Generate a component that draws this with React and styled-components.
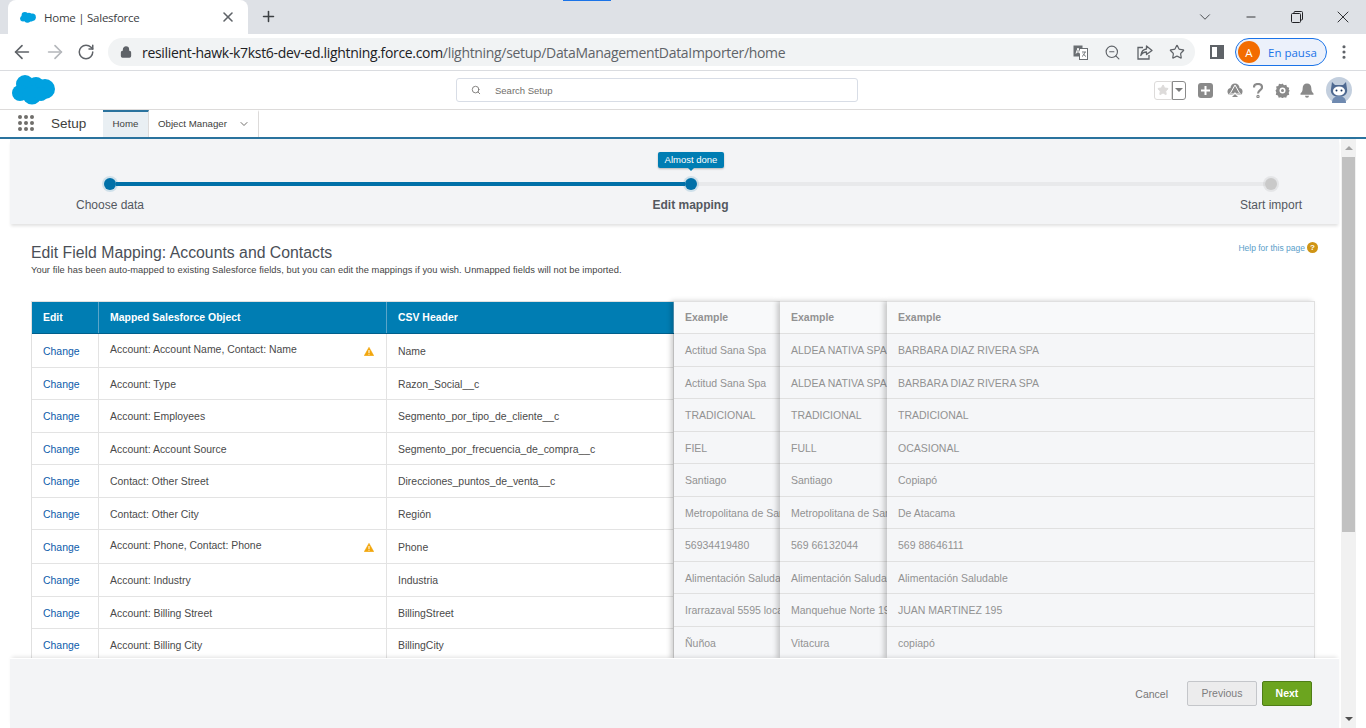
import React from 'react';
import styled, { createGlobalStyle } from 'styled-components';
import { ArrowLeft, ArrowRight, RotateCw, Lock, X, Plus, Minus, ChevronDown, Search, ZoomOut, Star, EllipsisVertical } from 'lucide-react';

const GlobalStyle = createGlobalStyle`
	html, body { margin: 0; padding: 0; height: 100%; overflow: hidden; background: #fff; }
	body { font-family: "Liberation Sans", Arial, sans-serif; }
	* { box-sizing: border-box; }
`;

const Page = styled.div`
	width: 1366px;
	height: 728px;
	display: flex;
	flex-direction: column;
	overflow: hidden;
`;

/* browser chrome */
const TabStrip = styled.div`
	height: 34px;
	background: #dee1e6;
	display: flex;
	align-items: center;
	padding-left: 8px;
	position: relative;
`;
const LoadBar = styled.div`
	position: absolute;
	left: 563px;
	top: 0;
	width: 48px;
	height: 1px;
	background: #1a73e8;
`;
const Tab = styled.div`
	width: 240px;
	height: 34px;
	background: #fff;
	border-radius: 8px 8px 0 0;
	display: flex;
	align-items: center;
	padding: 0 12px 0 12px;
	font: 11.5px "Open Sans", "Noto Sans", sans-serif;
	letter-spacing: -0.25px;
	color: #3c4043;
`;
const TabTitle = styled.span`
	flex: 1;
	margin-left: 8px;
`;
const NewTab = styled.div`
	margin: -1px 0 0 12px;
	display: flex;
	color: #3c4043;
`;
const WindowControls = styled.div`
	margin-left: auto;
	display: flex;
	align-items: center;
	color: #3c4043;
`;
const WindowButton = styled.div`
	width: 46px;
	height: 28px;
	display: flex;
	align-items: center;
	justify-content: center;
`;
const Toolbar = styled.div`
	height: 37px;
	background: #fff;
	border-bottom: 1px solid #dadce0;
	display: flex;
	align-items: center;
	padding-left: 10px;
	color: #5f6368;
`;
const NavButton = styled.div`
	width: 24px;
	flex: none;
	display: flex;
	justify-content: center;
	margin-right: ${p => p.$gap}px;
	color: ${p => p.$off ? '#b4b7bb' : '#5f6368'};
`;
const Omnibox = styled.div`
	width: 1087px;
	height: 28px;
	margin-left: 2px;
	background: #f1f3f4;
	border-radius: 14px;
	display: flex;
	align-items: center;
	padding: 0 10px 0 12px;
`;
const Url = styled.div`
	flex: 1;
	margin-left: 10px;
	font: 14px "Open Sans", "Noto Sans", sans-serif;
	letter-spacing: -0.32px;
	color: #5f6368;
	white-space: nowrap;
`;
const Host = styled.span`
	color: #202124;
`;
const OmniIcons = styled.div`
	display: flex;
	align-items: center;
	gap: 16px;
	color: #5f6368;
`;
const SidePanel = styled.div`
	width: 14px;
	height: 14px;
	margin-left: 15px;
	border: 2px solid #5f6368;
	border-right-width: 7px;
`;
const Profile = styled.div`
	width: 92px;
	height: 28px;
	margin-left: 11px;
	border: 1px solid #1a73e8;
	border-radius: 14px;
	background: #ecf1fb;
	display: flex;
	align-items: center;
	padding-left: 2px;
	font: 11.5px "Open Sans", "Noto Sans", sans-serif;
	color: #1a73e8;
`;
const ProfileAvatar = styled.div`
	width: 22px;
	height: 22px;
	border-radius: 50%;
	background: #f36c00;
	color: #fff;
	display: flex;
	align-items: center;
	justify-content: center;
	margin-right: 8px;
`;
const MenuDots = styled.div`
	margin-left: 8px;
	display: flex;
`;

/* salesforce header */
const GlobalHeader = styled.div`
	height: 39px;
	background: #fff;
	border-bottom: 1px solid #dddbda;
	display: flex;
	align-items: center;
	padding: 0 14px 0 12px;
`;
const SearchBox = styled.div`
	width: 402px;
	height: 24px;
	margin-left: 401px;
	border: 1px solid #d8dde6;
	border-radius: 3px;
	display: flex;
	align-items: center;
	padding-left: 14px;
	font-size: 9.5px;
	color: #706e6b;
	gap: 14px;
`;
const HeaderActions = styled.div`
	margin-left: auto;
	display: flex;
	align-items: center;
`;
const FavStar = styled.div`
	width: 18px;
	height: 19px;
	border: 1px solid #dddbda;
	border-radius: 3px 0 0 3px;
	display: flex;
	align-items: center;
	justify-content: center;
	color: #dddbda;
`;
const FavMenu = styled.div`
	width: 14px;
	height: 19px;
	border: 1px solid #8a8a8a;
	border-radius: 0 3px 3px 0;
	display: flex;
	align-items: center;
	justify-content: center;
	margin-right: 12px;
	&::after {
		content: '';
		border: 4px solid transparent;
		border-top: 4px solid #7a7a7a;
		border-bottom: 0;
	}
`;
const HeaderIcon = styled.svg`
	display: block;
	margin-right: ${p => p.$gap}px;
`;

const NavBar = styled.div`
	height: 27px;
	background: #fff;
	display: flex;
	align-items: stretch;
`;
const Launcher = styled.div`
	width: 16px;
	margin: 5px 0 6px 18px;
	display: grid;
	grid-template-columns: repeat(3, 4px);
	grid-auto-rows: 4px;
	gap: 2px;
`;
const LauncherDot = styled.span`
	background: #706e6b;
	border-radius: 50%;
`;
const AppName = styled.div`
	width: 52px;
	margin-left: 17px;
	font-size: 13.5px;
	line-height: 27px;
	color: #3e3e3c;
`;
const NavTab = styled.div`
	display: flex;
	align-items: center;
	justify-content: ${p => p.$active ? 'center' : 'flex-start'};
	width: ${p => p.$active ? 46 : 110}px;
	padding: 0 0 2px ${p => p.$active ? 0 : 9}px;
	border-top: 2px solid ${p => p.$active ? '#2a739e' : 'transparent'};
	border-right: 1px solid #dddbda;
	background: ${p => p.$active ? '#e9eff3' : '#fff'};
	font-size: 9.7px;
	color: #3e3e3c;
	gap: 11px;
`;
const BlueRule = styled.div`
	height: 2px;
	background: #2a739e;
`;

/* wizard */
const Content = styled.div`
	flex: 1;
	min-height: 0;
	display: flex;
	padding-left: 10px;
	background: #fff;
`;
const Wizard = styled.div`
	width: 1329px;
	display: flex;
	flex-direction: column;
	min-height: 0;
`;
const StepperPanel = styled.div`
	position: relative;
	z-index: 2;
	height: 85px;
	flex: none;
	background: #f3f4f6;
	box-shadow: 0 3px 3px -1px rgba(0, 0, 0, 0.12);
	padding-top: 39px;
`;
const Track = styled.div`
	display: flex;
	align-items: center;
	margin: 0 62px 0 94px;
`;
const Segment = styled.div`
	flex: ${p => p.$grow};
	height: 4px;
	background: ${p => p.$done ? '#0070a8' : '#e8e9eb'};
`;
const Dot = styled.div`
	position: relative;
	width: 12px;
	height: 12px;
	flex: none;
	border-radius: 50%;
	background: ${p => p.$done ? '#0070a8' : '#c9c9c9'};
	box-shadow: 0 0 0 2px ${p => p.$done ? 'rgba(0, 112, 168, 0.15)' : 'rgba(0, 0, 0, 0.06)'};
`;
const Tooltip = styled.div`
	position: absolute;
	left: 50%;
	bottom: 22px;
	transform: translateX(-50%);
	width: 66px;
	height: 16px;
	background: #007db3;
	border-radius: 2px;
	color: #fff;
	font-size: 9.5px;
	line-height: 16px;
	text-align: center;
	white-space: nowrap;
	box-shadow: 0 1px 2px rgba(0, 0, 0, 0.25);
	&::after {
		content: '';
		position: absolute;
		left: 50%;
		top: 100%;
		margin-left: -3px;
		border: 3px solid transparent;
		border-top-color: #007db3;
		border-bottom: 0;
	}
`;
const StepLabels = styled.div`
	display: grid;
	grid-template-columns: 120px 1fr 120px;
	margin: 8px 8px 0 40px;
`;
const StepLabel = styled.div`
	text-align: center;
	font-size: 12px;
	line-height: 15px;
	color: #54585f;
	font-weight: ${p => p.$current ? 700 : 400};
	white-space: nowrap;
`;
const Body = styled.div`
	flex: 1;
	min-height: 0;
	overflow: hidden;
	background: #fff;
	padding: 19px 21px 0;
`;
const TitleRow = styled.div`
	display: flex;
	justify-content: space-between;
	height: 58px;
`;
const Title = styled.h1`
	margin: 0;
	font-size: 15.8px;
	line-height: 20px;
	font-weight: 400;
	color: #4a4f57;
`;
const Description = styled.p`
	margin: 1px 0 0;
	font-size: 9.3px;
	line-height: 13px;
	color: #444;
	letter-spacing: 0.06px;
`;
const HelpLink = styled.div`
	display: flex;
	align-items: center;
	align-self: flex-start;
	gap: 2px;
	margin-top: -1px;
	font-size: 8.5px;
	color: #5a9ec9;
`;
const HelpIcon = styled.span`
	width: 11px;
	height: 11px;
	border-radius: 50%;
	background: #cf9415;
	color: #fff;
	font-size: 8px;
	font-weight: 700;
	line-height: 11px;
	text-align: center;
`;
const TableWrap = styled.div`
	display: flex;
	align-items: flex-start;
`;
const MappingTable = styled.div`
	width: 643px;
	flex: none;
	border-left: 1px solid #e0e0e0;
	border-top: 1px solid #e0e0e0;
`;
const MappingRow = styled.div`
	display: grid;
	grid-template-columns: 67px 288px 287px;
	height: ${p => p.$h}px;
	background: ${p => p.$head ? '#007db3' : '#fff'};
	border-bottom: 1px solid ${p => p.$head ? '#005f8c' : '#e3e3e3'};
	font-size: 10.45px;
	color: #4a4a4a;
`;
const MappingCell = styled.div`
	display: flex;
	align-items: center;
	justify-content: space-between;
	padding: ${p => p.$head ? 0 : 2}px 12px 0 11px;
	border-right: 1px solid ${p => p.$head ? '#5aa5c9' : '#e3e3e3'};
	color: ${p => p.$link ? '#0b5cab' : p.$head ? '#fff' : '#4a4a4a'};
	font-weight: ${p => p.$head ? 700 : 400};
	white-space: nowrap;
`;
const WarnText = styled.span`
	margin-top: -4px;
`;
const ExampleColumn = styled.div`
	position: relative;
	flex: none;
	width: ${p => p.$w}px;
	background: #f5f6f8;
	border-top: 1px solid #e0e0e0;
	border-right: ${p => p.$last ? '1px solid #e0e0e0' : '0'};
	box-shadow: -3px 0 5px rgba(0, 0, 0, 0.2);
`;
const ExampleHead = styled.div`
	height: 32px;
	padding-left: 11px;
	background: #f8f9fa;
	border-bottom: 1px solid #e0e0e0;
	font-size: 10.5px;
	font-weight: 700;
	line-height: 31px;
	color: #929292;
`;
const ExampleCell = styled.div`
	height: 32.5px;
	padding-left: 11px;
	border-bottom: 1px solid #e0e0e0;
	font-size: 10.5px;
	line-height: 32px;
	color: #929292;
	white-space: nowrap;
	overflow: hidden;
`;
const Footer = styled.div`
	position: relative;
	z-index: 3;
	height: 70px;
	flex: none;
	background: #f3f4f6;
	border-top: 1px solid #fff;
	box-shadow: 0 -3px 4px -2px rgba(0, 0, 0, 0.12);
	display: flex;
	align-items: center;
	justify-content: flex-end;
	padding: 0 27px 0 0;
`;
const CancelLink = styled.div`
	font-size: 10.5px;
	color: #777;
	margin-right: 19px;
`;
const Button = styled.div`
	height: 25px;
	width: ${p => p.$w}px;
	margin-right: ${p => p.$gap || 0}px;
	border-radius: 2px;
	border: 1px solid ${p => p.$primary ? '#4f7d17' : '#c4c6ca'};
	background: ${p => p.$primary ? '#6ca51f' : '#ececed'};
	color: ${p => p.$primary ? '#fff' : '#7d7d7d'};
	font-size: 10.5px;
	font-weight: ${p => p.$primary ? 700 : 400};
	line-height: 23px;
	text-align: center;
`;

/* page scrollbar */
const Scrollbar = styled.div`
	width: 15px;
	margin: 0 10px 0 2px;
	background: #f1f1f1;
	display: flex;
	flex-direction: column;
	align-items: center;
`;
const ScrollArrow = styled.div`
	height: 18px;
	flex: none;
	display: flex;
	align-items: center;
	justify-content: center;
	&::after {
		content: '';
		border: 4px solid transparent;
		${p => p.$down ? 'border-top: 4px solid #505050; border-bottom: 0;' : 'border-bottom: 4px solid #a3a3a3; border-top: 0;'}
	}
`;
const ScrollThumb = styled.div`
	width: 13px;
	height: 375px;
	flex: none;
	background: #c1c1c1;
`;
const ScrollRest = styled.div`
	flex: 1;
`;

const rows = [
	{ obj: 'Account: Account Name, Contact: Name', csv: 'Name', warn: true },
	{ obj: 'Account: Type', csv: 'Razon_Social__c' },
	{ obj: 'Account: Employees', csv: 'Segmento_por_tipo_de_cliente__c' },
	{ obj: 'Account: Account Source', csv: 'Segmento_por_frecuencia_de_compra__c' },
	{ obj: 'Contact: Other Street', csv: 'Direcciones_puntos_de_venta__c' },
	{ obj: 'Contact: Other City', csv: 'Región' },
	{ obj: 'Account: Phone, Contact: Phone', csv: 'Phone', warn: true },
	{ obj: 'Account: Industry', csv: 'Industria' },
	{ obj: 'Account: Billing Street', csv: 'BillingStreet' },
	{ obj: 'Account: Billing City', csv: 'BillingCity' },
];

const examples = [
	{ w: 106, cells: ['Actitud Sana Spa', 'Actitud Sana Spa', 'TRADICIONAL', 'FIEL', 'Santiago', 'Metropolitana de Santiago', '56934419480', 'Alimentación Saludable', 'Irarrazaval 5595 local 3', 'Ñuñoa'] },
	{ w: 107, cells: ['ALDEA NATIVA SPA', 'ALDEA NATIVA SPA', 'TRADICIONAL', 'FULL', 'Santiago', 'Metropolitana de Santiago', '569 66132044', 'Alimentación Saludable', 'Manquehue Norte 1950', 'Vitacura'] },
	{ w: 428, last: true, cells: ['BARBARA DIAZ RIVERA SPA', 'BARBARA DIAZ RIVERA SPA', 'TRADICIONAL', 'OCASIONAL', 'Copiapó', 'De Atacama', '569 88646111', 'Alimentación Saludable', 'JUAN MARTINEZ 195', 'copiapó'] },
];

const SalesforceCloud = ({ w, h }) => (
	<svg width={w} height={h} viewBox="0 0 43 30" fill="#00a1e0">
		<circle cx="13" cy="9" r="9" />
		<circle cx="24" cy="10" r="8" />
		<circle cx="33" cy="14" r="10" />
		<circle cx="8" cy="18" r="8" />
		<circle cx="20" cy="20" r="9.5" />
		<circle cx="29" cy="19" r="7" />
	</svg>
);

const WarnIcon = () => (
	<svg width="10" height="9" viewBox="0 0 10 9">
		<path d="M5 0.3 9.8 8.7H0.2Z" fill="#f2a60c" stroke="#f2a60c" strokeWidth="0.5" strokeLinejoin="round" />
		<path d="M4.5 3h1v3h-1zM4.5 6.8h1v1h-1z" fill="#fff" />
	</svg>
);

const TranslateIcon = () => (
	<svg width="15" height="15" viewBox="0 0 15 15">
		<rect x="0.5" y="0.5" width="9" height="11" fill="#6a6e72" />
		<rect x="6.5" y="3.5" width="8" height="11" fill="#fff" stroke="#6a6e72" />
		<path d="M3 8.5 5 3l2 5.5M3.6 7h2.8" fill="none" stroke="#fff" strokeWidth="1" />
		<path d="M9 7h4M12 7c-.5 2-1.5 3.5-3 4.5M10 8.5c.6 1.2 1.6 2.3 3 3" fill="none" stroke="#6a6e72" strokeWidth="0.9" />
	</svg>
);

const ShareIcon = () => (
	<svg width="16" height="15" viewBox="0 0 16 15" fill="none" stroke="#5f6368" strokeWidth="1.3">
		<path d="M6 2.5H1V14h11v-4" />
		<path d="M9.5 1 15 5.5 9.5 9.5V7C7 7 5 8.2 3.8 10.5 4.3 6.8 6.3 4.3 9.5 4Z" strokeLinejoin="round" />
	</svg>
);

const RestoreIcon = () => (
	<svg width="12" height="12" viewBox="0 0 12 12" fill="none" stroke="#202124" strokeWidth="1">
		<rect x="0.5" y="2.5" width="9" height="9" rx="1" />
		<path d="M3 2.5v-1a1 1 0 0 1 1-1h6.5a1 1 0 0 1 1 1V8a1 1 0 0 1-1 1h-1" />
	</svg>
);

const App = () => (
	<Page>
		<GlobalStyle />
		<TabStrip>
			<LoadBar />
			<Tab>
				<SalesforceCloud w={16} h={11} />
				<TabTitle>Home | Salesforce</TabTitle>
				<X size={16} strokeWidth={2.4} color="#5f6368" />
			</Tab>
			<NewTab><Plus size={17} strokeWidth={2.2} /></NewTab>
			<WindowControls>
				<WindowButton><ChevronDown size={18} strokeWidth={1.2} /></WindowButton>
				<WindowButton><Minus size={14} strokeWidth={1.5} color="#202124" /></WindowButton>
				<WindowButton><RestoreIcon /></WindowButton>
				<WindowButton><X size={20} strokeWidth={1.1} color="#202124" /></WindowButton>
			</WindowControls>
		</TabStrip>
		<Toolbar>
			<NavButton $gap={9}><ArrowLeft size={22} strokeWidth={1.8} /></NavButton>
			<NavButton $gap={7} $off><ArrowRight size={22} strokeWidth={1.8} /></NavButton>
			<NavButton $gap={8}><RotateCw size={18} strokeWidth={2} /></NavButton>
			<Omnibox>
				<Lock size={12} strokeWidth={2.6} color="#5f6368" fill="#5f6368" />
				<Url><Host>resilient-hawk-k7kst6-dev-ed.lightning.force.com</Host>/lightning/setup/DataManagementDataImporter/home</Url>
				<OmniIcons>
					<TranslateIcon />
					<ZoomOut size={17} strokeWidth={1.6} />
					<ShareIcon />
					<Star size={16} strokeWidth={1.8} />
				</OmniIcons>
			</Omnibox>
			<SidePanel />
			<Profile>
				<ProfileAvatar>A</ProfileAvatar>
				En pausa
			</Profile>
			<MenuDots><EllipsisVertical size={18} strokeWidth={2.2} /></MenuDots>
		</Toolbar>
		<GlobalHeader>
			<SalesforceCloud w={43} h={30} />
			<SearchBox>
				<Search size={10} color="#706e6b" />
				Search Setup
			</SearchBox>
			<HeaderActions>
				<FavStar><Star size={12} fill="#dddbda" /></FavStar>
				<FavMenu />
				<HeaderIcon $gap={14} width="15" height="15" viewBox="0 0 15 15">
					<rect width="15" height="15" rx="3" fill="#8a8a8a" />
					<path d="M7.5 3v9M3 7.5h9" stroke="#fff" strokeWidth="2" />
				</HeaderIcon>
				<HeaderIcon $gap={10} width="16" height="14" viewBox="0 0 16 14" fill="#8a8a8a">
					<circle cx="8" cy="5" r="4.5" />
					<circle cx="4" cy="8.5" r="3.5" />
					<circle cx="12" cy="8.5" r="3.5" />
					<path d="M8 2 3.5 10M8 2l4.500 8M2 11h12" stroke="#fff" strokeWidth="1" />
					<path d="M5 14l3-3 3 3z" />
				</HeaderIcon>
				<HeaderIcon $gap={12} width="10" height="15" viewBox="0 0 10 15" fill="none" stroke="#8a8a8a" strokeWidth="2.2">
					<path d="M1 4.5C1 2.3 2.8 1 5 1s4 1.3 4 3.5c0 2.5-4 2.8-4 6" />
					<circle cx="5" cy="13.5" r="0.6" />
				</HeaderIcon>
				<HeaderIcon $gap={10} width="15" height="15" viewBox="0 0 15 15">
					<path d="M7.5 0.5 9 2.3l2.3-.5.7 2.2 2.2.8-.5 2.3 1 .5-1 1.9.5 2.3-2.2.7-.8 2.2-2.3-.5-1.4 1.3-1.5-1.3-2.3.5-.7-2.2-2.2-.7.5-2.3L.5 7.500l1.100-1.600-.5-2.300 2.200-.7.7-2.200 2.300.5z" fill="#8a8a8a" />
					<circle cx="7.5" cy="7.5" r="3" fill="#fff" />
					<circle cx="7.5" cy="7.5" r="1.5" fill="#8a8a8a" />
				</HeaderIcon>
				<HeaderIcon $gap={12} width="14" height="15" viewBox="0 0 14 15" fill="#8a8a8a">
					<path d="M7 .5c2.7 0 4.3 2 4.3 4.6 0 3 .9 4.2 2.2 5.4v1.2H.5v-1.200C1.800 9.300 2.700 8.100 2.700 5.100 2.700 2.500 4.300 .5 7 .5Z" />
					<path d="M5 12.700h4a2 2 0 0 1-4 0Z" />
				</HeaderIcon>
				<HeaderIcon $gap={0} width="26" height="26" viewBox="0 0 26 26">
					<circle cx="13" cy="13" r="13" fill="#c3cfde" />
					<path d="M6 5l3 3h8l3-3 1 7c1 4-2 8-8 8s-9-4-8-8z" fill="#4f6a92" />
					<ellipse cx="13" cy="14" rx="6" ry="4.5" fill="#fff" />
					<circle cx="10.5" cy="13.5" r="1" fill="#16325c" />
					<circle cx="15.5" cy="13.5" r="1" fill="#16325c" />
					<path d="M6 26c0-5 3-7 7-7s7 2 7 7z" fill="#6f8ab0" />
				</HeaderIcon>
			</HeaderActions>
		</GlobalHeader>
		<NavBar>
			<Launcher>
				{Array.from({ length: 9 }, (_, i) => <LauncherDot key={i} />)}
			</Launcher>
			<AppName>Setup</AppName>
			<NavTab $active>Home</NavTab>
			<NavTab>Object Manager <ChevronDown size={12} color="#706e6b" /></NavTab>
		</NavBar>
		<BlueRule />
		<Content>
			<Wizard>
				<StepperPanel>
					<Track>
						<Dot $done />
						<Segment $done $grow={569} />
						<Dot $done><Tooltip>Almost done</Tooltip></Dot>
						<Segment $grow={568} />
						<Dot />
					</Track>
					<StepLabels>
						<StepLabel>Choose data</StepLabel>
						<StepLabel $current>Edit mapping</StepLabel>
						<StepLabel>Start import</StepLabel>
					</StepLabels>
				</StepperPanel>
				<Body>
					<TitleRow>
						<div>
							<Title>Edit Field Mapping: Accounts and Contacts</Title>
							<Description>Your file has been auto-mapped to existing Salesforce fields, but you can edit the mappings if you wish. Unmapped fields will not be imported.</Description>
						</div>
						<HelpLink>Help for this page <HelpIcon>?</HelpIcon></HelpLink>
					</TitleRow>
					<TableWrap>
						<MappingTable>
							<MappingRow $head $h={31.5}>
								<MappingCell $head>Edit</MappingCell>
								<MappingCell $head>Mapped Salesforce Object</MappingCell>
								<MappingCell $head>CSV Header</MappingCell>
							</MappingRow>
							{rows.map(row => (
								<MappingRow key={row.obj} $h={row.warn ? 34 : 32.5}>
									<MappingCell $link>Change</MappingCell>
									<MappingCell>
										{row.warn ? <WarnText>{row.obj}</WarnText> : row.obj}
										{row.warn && <WarnIcon />}
									</MappingCell>
									<MappingCell>{row.csv}</MappingCell>
								</MappingRow>
							))}
						</MappingTable>
						{examples.map((col, i) => (
							<ExampleColumn key={i} $w={col.w} $last={col.last}>
								<ExampleHead>Example</ExampleHead>
								{col.cells.map((text, j) => <ExampleCell key={j}>{text}</ExampleCell>)}
							</ExampleColumn>
						))}
					</TableWrap>
				</Body>
				<Footer>
					<CancelLink>Cancel</CancelLink>
					<Button $w={70} $gap={5}>Previous</Button>
					<Button $w={50} $primary>Next</Button>
				</Footer>
			</Wizard>
			<Scrollbar>
				<ScrollArrow />
				<ScrollThumb />
				<ScrollRest />
				<ScrollArrow $down />
			</Scrollbar>
		</Content>
	</Page>
);

export default App;
